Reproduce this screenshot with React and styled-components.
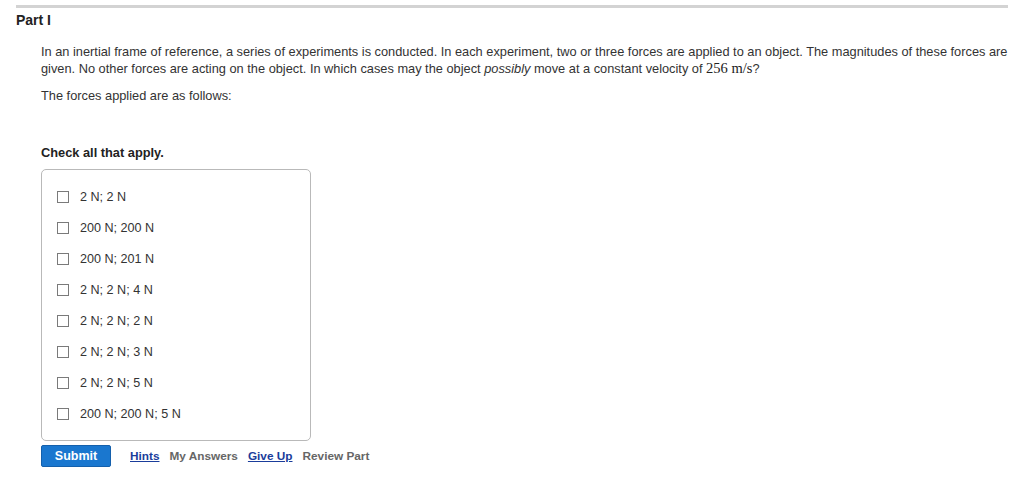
import React from "react";
import styled, { createGlobalStyle } from "styled-components";

const Global = createGlobalStyle`
  html, body { margin: 0; padding: 0; background: #fff; }
  body { font-family: "Liberation Sans", Arial, sans-serif; color: #333; }
`;

const Page = styled.div`
  padding: 5px 16px 0;
  width: 1024px;
  box-sizing: border-box;
`;

const Rule = styled.div`
  height: 3px;
  background: #d3d3d3;
`;

const PartTitle = styled.h2`
  margin: 4px 0 0;
  font-size: 14px;
  line-height: 16px;
  font-weight: bold;
  color: #222;
`;

const Body = styled.div`
  padding-left: 25px;
`;

const Para = styled.p`
  margin: ${(p) => p.$mt || 0}px 0 0;
  font-size: 12.8px;
  line-height: 17px;
  color: #333;
`;

const Math = styled.span`
  font-family: "Liberation Serif", "DejaVu Serif", serif;
  font-size: 14.5px;
  line-height: 1;
  color: #222;
`;

const Instruction = styled.div`
  margin-top: 40px;
  font-size: 12.8px;
  line-height: 17px;
  font-weight: bold;
  color: #222;
`;

const OptionsBox = styled.div`
  margin-top: 8px;
  width: 270px;
  box-sizing: border-box;
  border: 1px solid #b9b9b9;
  border-radius: 5px;
  padding: 11px 0 11px 15px;
`;

const Row = styled.label`
  display: flex;
  align-items: center;
  height: 31px;
  font-size: 12.6px;
  color: #333;
`;

const Box = styled.span`
  width: 12px;
  height: 12px;
  box-sizing: border-box;
  border: 1px solid #7a7a7a;
  background: #fff;
  margin-right: 11px;
  flex: none;
`;

const Actions = styled.div`
  margin-top: 4px;
  display: flex;
  align-items: center;
`;

const SubmitButton = styled.button`
  width: 70px;
  height: 22px;
  box-sizing: border-box;
  border: 1px solid #1460ac;
  border-radius: 2px;
  background: #1a77cf;
  color: #fff;
  font-family: "Liberation Sans", Arial, sans-serif;
  font-size: 12.5px;
  font-weight: bold;
  padding: 0;
  margin-right: 19px;
`;

const ActionLink = styled.span`
  font-size: 11.8px;
  font-weight: bold;
  margin-right: 10px;
  color: ${(p) => (p.$active ? "#1a3d9b" : "#666")};
  text-decoration: ${(p) => (p.$active ? "underline" : "none")};
`;

const options = [
  "2 N; 2 N",
  "200 N; 200 N",
  "200 N; 201 N",
  "2 N; 2 N; 4 N",
  "2 N; 2 N; 2 N",
  "2 N; 2 N; 3 N",
  "2 N; 2 N; 5 N",
  "200 N; 200 N; 5 N",
];

export default function App() {
  return (
    <>
      <Global />
      <Page>
        <Rule />
        <PartTitle>Part I</PartTitle>
        <Body>
          <Para $mt={15}>
            In an inertial frame of reference, a series of experiments is conducted. In each experiment, two or three
            forces are applied to an object. The magnitudes of these forces are given. No other forces are acting on the
            object. In which cases may the object <i>possibly</i> move at a constant velocity of{" "}
            <Math>256 m/s</Math>?
          </Para>
          <Para $mt={10}>The forces applied are as follows:</Para>
          <Instruction>Check all that apply.</Instruction>
          <OptionsBox>
            {options.map((o) => (
              <Row key={o}>
                <Box />
                {o}
              </Row>
            ))}
          </OptionsBox>
          <Actions>
            <SubmitButton>Submit</SubmitButton>
            <ActionLink $active>Hints</ActionLink>
            <ActionLink>My Answers</ActionLink>
            <ActionLink $active>Give Up</ActionLink>
            <ActionLink>Review Part</ActionLink>
          </Actions>
        </Body>
      </Page>
    </>
  );
}
